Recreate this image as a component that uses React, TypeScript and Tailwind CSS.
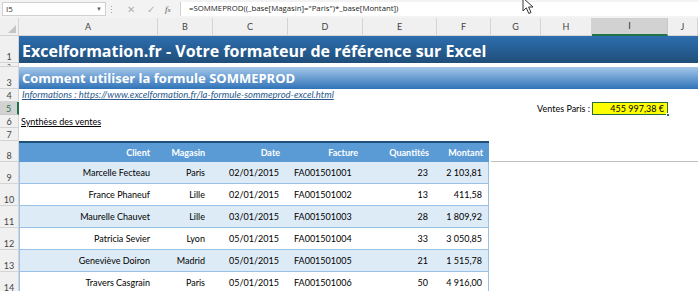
import React from "react";

const data: string[][] = [
  ["Marcelle Fecteau", "Paris", "02/01/2015", "FA001501001", "23", "2 103,81"],
  ["France Phaneuf", "Lille", "02/01/2015", "FA001501002", "13", "411,58"],
  ["Maurelle Chauvet", "Lille", "03/01/2015", "FA001501003", "28", "1 809,92"],
  ["Patricia Sevier", "Lyon", "05/01/2015", "FA001501004", "33", "3 050,85"],
  ["Geneviève Doiron", "Madrid", "05/01/2015", "FA001501005", "21", "1 515,78"],
  ["Travers Casgrain", "Paris", "05/01/2015", "FA001501006", "50", "4 916,00"],
];

function RH({ n, sel = false, top = false }: { n: number; sel?: boolean; top?: boolean }) {
  return (
    <div
      className={
        sel
          ? "flex items-end justify-center overflow-hidden border-b border-r-2 border-b-[#c8c8c8] border-r-[#217346] bg-[#d2d2d2] pb-[1px] text-[9px] leading-none text-[#217346]"
          : top
          ? "flex items-start justify-center overflow-hidden border-b border-r border-[#d4d4d4] bg-[#f0f0f0] text-[6px] leading-none text-[#444]"
          : "flex items-end justify-center overflow-hidden border-b border-r border-[#d4d4d4] bg-[#f0f0f0] pb-[1px] text-[9px] leading-none text-[#444]"
      }
    >
      {n}
    </div>
  );
}

function ColHead({ l, sel = false }: { l: string; sel?: boolean }) {
  return (
    <div
      className={
        sel
          ? "flex items-center justify-center border-b-2 border-r border-b-[#217346] border-r-[#c8c8c8] bg-[#d2d2d2] text-[9px] text-[#333]"
          : "flex items-center justify-center border-b border-r border-[#d4d4d4] bg-[#f0f0f0] text-[9px] text-[#444]"
      }
    >
      {l}
    </div>
  );
}

export default function App() {
  const heads = ["Client", "Magasin", "Date", "Facture", "Quantités", "Montant"];
  return (
    <div className="relative h-[291px] w-[698px] overflow-hidden bg-white font-['Lato',sans-serif] text-black">
      {/* formula bar */}
      <div className="flex h-[18px] items-center bg-[#f3f3f3] font-['Open_Sans',sans-serif]">
        <div className="ml-[2px] flex h-[14px] w-[104px] items-center justify-between border border-[#d0d0d0] bg-white px-[3px] text-[8px] text-[#333]">
          <span>I5</span>
          <span className="text-[6px] text-[#666]">▼</span>
        </div>
        <div className="ml-[3px] flex h-[10px] w-[4px] flex-col items-center justify-center gap-[2px]">
          <span className="h-[1px] w-[1px] bg-[#aaa]" />
          <span className="h-[1px] w-[1px] bg-[#aaa]" />
          <span className="h-[1px] w-[1px] bg-[#aaa]" />
        </div>
        <div className="ml-[14px] text-[10px] leading-none text-[#b0b0b0]">✕</div>
        <div className="ml-[12px] text-[10px] leading-none text-[#b0b0b0]">✓</div>
        <div className="ml-[10px] font-['Liberation_Serif',serif] text-[9px] italic leading-none text-[#555]">
          f<span className="text-[7px]">x</span>
        </div>
        <div className="ml-auto flex h-[14px] w-[518px] items-center border-l border-[#d0d0d0] bg-white pl-[8px] text-[7.8px] text-[#222]">
          =SOMMEPROD((_base[Magasin]="Paris")*_base[Montant])
        </div>
      </div>

      <div className="grid grid-cols-[19px_139px_55px_75px_75px_74px_54px_50px_51px_76px_30px] grid-rows-[18px_27px_4px_22px_13px_13px_13px_13px_21px_22px_22px_22px_22px_22px_22px] font-['Lato',sans-serif]">
        {/* column headers */}
        <div className="relative border-b border-r border-[#d4d4d4] bg-[#f0f0f0]">
          <svg className="absolute bottom-[2px] right-[2px]" width="8" height="8" viewBox="0 0 8 8">
            <path d="M8 0 L8 8 L0 8 Z" fill="#c4c4c4" />
          </svg>
        </div>
        <ColHead l="A" />
        <ColHead l="B" />
        <ColHead l="C" />
        <ColHead l="D" />
        <ColHead l="E" />
        <ColHead l="F" />
        <ColHead l="G" />
        <ColHead l="H" />
        <ColHead l="I" sel />
        <ColHead l="J" />

        {/* row 1 title */}
        <RH n={1} />
        <div className="col-span-10 flex items-center bg-gradient-to-b from-[#2d6eb0] to-[#1f4e79] pl-[3px] pt-[2px] font-['Open_Sans',sans-serif] text-[16px] font-bold whitespace-nowrap text-white">
          Excelformation.fr - Votre formateur de référence sur Excel
        </div>

        {/* row 2 */}
        <RH n={2} top />
        <div className="col-span-10" />

        {/* row 3 */}
        <RH n={3} />
        <div className="col-span-10 flex items-center bg-gradient-to-b from-[#a4c8ea] to-[#2f73b7] pl-[3px] pt-[1px] font-['Open_Sans',sans-serif] text-[13px] font-bold whitespace-nowrap text-white">
          Comment utiliser la formule SOMMEPROD
        </div>

        {/* row 4 */}
        <RH n={4} />
        <div className="col-span-10 flex items-center pl-[3px] text-[9.5px] italic whitespace-nowrap text-[#2a5a8c] underline">
          Informations : https://www.excelformation.fr/la-formule-sommeprod-excel.html
        </div>

        {/* row 5 */}
        <RH n={5} sel />
        <div className="col-span-7" />
        <div className="flex items-center justify-end pr-[2px] text-[9px] whitespace-nowrap">Ventes Paris :</div>
        <div className="relative flex items-center justify-end border-[1.5px] border-[#2a6b3a] bg-[#ffff00] pr-[3px] text-[9px] whitespace-nowrap">
          455 997,38 €
          <span className="absolute -bottom-[3px] -right-[3px] h-[4px] w-[4px] border border-white bg-[#217346]" />
        </div>
        <div />

        {/* row 6 */}
        <RH n={6} />
        <div className="col-span-10 flex items-center pl-[2px] text-[9px] whitespace-nowrap underline">Synthèse des ventes</div>

        {/* row 7 */}
        <RH n={7} />
        <div className="col-span-10" />

        {/* row 8 header */}
        <RH n={8} />
        {heads.map((h, i) => (
          <div
            key={h}
            className={
              i === 5
                ? "mr-[2px] flex items-center justify-end border-t-2 border-t-[#1f4e79] bg-[#5b9bd5] pr-[6px] text-[9px] font-bold text-white"
                : i === 3
                ? "flex items-center justify-end border-t-2 border-t-[#1f4e79] bg-[#5b9bd5] pr-[5px] text-[9px] font-bold text-white"
                : "flex items-center justify-end border-t-2 border-t-[#1f4e79] bg-[#5b9bd5] pr-[8px] text-[9px] font-bold text-white"
            }
          >
            {h}
          </div>
        ))}
        <div className="col-span-4 border-b border-[#c0c0c0]" />

        {/* data rows */}
        {data.map((r, ri) => {
          const bg = ri % 2 === 0 ? "bg-[#ddebf7]" : "bg-white";
          return (
            <React.Fragment key={ri}>
              <RH n={9 + ri} />
              <div className={"flex items-center justify-end border-b border-l border-[#9bc2e6] pr-[8px] text-[9px] whitespace-nowrap " + bg}>{r[0]}</div>
              <div className={"flex items-center justify-end border-b border-[#9bc2e6] pr-[8px] text-[9px] " + bg}>{r[1]}</div>
              <div className={"flex items-center justify-end border-b border-[#9bc2e6] pr-[9px] text-[9px] " + bg}>{r[2]}</div>
              <div className={"flex items-center justify-start border-b border-[#9bc2e6] pl-[6px] text-[9px] " + bg}>{r[3]}</div>
              <div className={"flex items-center justify-end border-b border-[#9bc2e6] pr-[9px] text-[9px] " + bg}>{r[4]}</div>
              <div className={"mr-[2px] flex items-center justify-end border-b border-r border-[#9bc2e6] pr-[6px] text-[9px] " + bg}>{r[5]}</div>
              <div className="col-span-4" />
            </React.Fragment>
          );
        })}
      </div>

      {/* mouse cursor */}
      <svg className="absolute left-[522px] top-[-3px]" width="13" height="18" viewBox="0 0 13 18">
        <path d="M1 1 L1 14 L4.3 10.8 L6.8 16.5 L9 15.5 L6.6 10 L11 10 Z" fill="white" stroke="#333" strokeWidth="1" strokeLinejoin="round" />
      </svg>
    </div>
  );
}
